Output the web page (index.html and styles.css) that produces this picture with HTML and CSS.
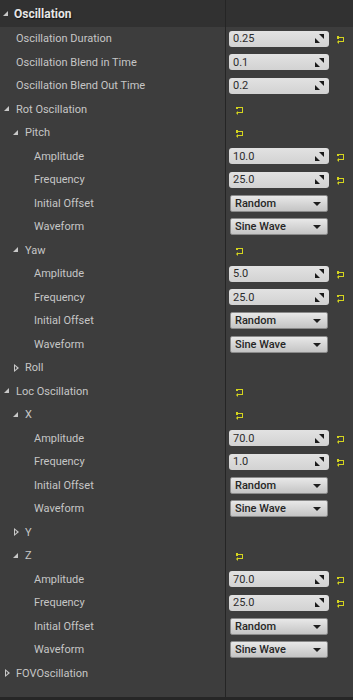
FILE: index.html
```html
<!DOCTYPE html>
<html lang="en">
<head>
    <meta charset="UTF-8">
    <meta name="viewport" content="width=device-width, initial-scale=1.0">
    <title>Details</title>
    <link rel="stylesheet" href="styles.css">
</head>
<body>
<div class="panel">

  <div class="row head">
    <div class="name"><span class="arrow open"></span>Oscillation</div>
    <div class="value"></div>
  </div>

  <div class="row l1">
    <div class="name"><span class="arrow"></span>Oscillation Duration</div>
    <div class="value"><div class="num">0.25<i class="spin"></i></div><i class="reset"></i></div>
  </div>
  <div class="row l1">
    <div class="name"><span class="arrow"></span>Oscillation Blend in Time</div>
    <div class="value"><div class="num">0.1<i class="spin"></i></div></div>
  </div>
  <div class="row l1">
    <div class="name"><span class="arrow"></span>Oscillation Blend Out Time</div>
    <div class="value"><div class="num">0.2<i class="spin"></i></div></div>
  </div>

  <div class="row l1">
    <div class="name"><span class="arrow open"></span>Rot Oscillation</div>
    <div class="value"><i class="reset grp"></i></div>
  </div>
  <div class="row l2">
    <div class="name"><span class="arrow open"></span>Pitch</div>
    <div class="value"><i class="reset grp"></i></div>
  </div>
  <div class="row l3">
    <div class="name"><span class="arrow"></span>Amplitude</div>
    <div class="value"><div class="num">10.0<i class="spin"></i></div><i class="reset"></i></div>
  </div>
  <div class="row l3">
    <div class="name"><span class="arrow"></span>Frequency</div>
    <div class="value"><div class="num">25.0<i class="spin"></i></div><i class="reset"></i></div>
  </div>
  <div class="row l3">
    <div class="name"><span class="arrow"></span>Initial Offset</div>
    <div class="value"><div class="combo">Random<i class="down"></i></div></div>
  </div>
  <div class="row l3">
    <div class="name"><span class="arrow"></span>Waveform</div>
    <div class="value"><div class="combo">Sine Wave<i class="down"></i></div></div>
  </div>

  <div class="row l2">
    <div class="name"><span class="arrow open"></span>Yaw</div>
    <div class="value"><i class="reset grp"></i></div>
  </div>
  <div class="row l3">
    <div class="name"><span class="arrow"></span>Amplitude</div>
    <div class="value"><div class="num">5.0<i class="spin"></i></div><i class="reset"></i></div>
  </div>
  <div class="row l3">
    <div class="name"><span class="arrow"></span>Frequency</div>
    <div class="value"><div class="num">25.0<i class="spin"></i></div><i class="reset"></i></div>
  </div>
  <div class="row l3">
    <div class="name"><span class="arrow"></span>Initial Offset</div>
    <div class="value"><div class="combo">Random<i class="down"></i></div></div>
  </div>
  <div class="row l3">
    <div class="name"><span class="arrow"></span>Waveform</div>
    <div class="value"><div class="combo">Sine Wave<i class="down"></i></div></div>
  </div>

  <div class="row l2">
    <div class="name"><span class="arrow shut"></span>Roll</div>
    <div class="value"></div>
  </div>

  <div class="row l1">
    <div class="name"><span class="arrow open"></span>Loc Oscillation</div>
    <div class="value"><i class="reset grp"></i></div>
  </div>
  <div class="row l2">
    <div class="name"><span class="arrow open"></span>X</div>
    <div class="value"><i class="reset grp"></i></div>
  </div>
  <div class="row l3">
    <div class="name"><span class="arrow"></span>Amplitude</div>
    <div class="value"><div class="num">70.0<i class="spin"></i></div><i class="reset"></i></div>
  </div>
  <div class="row l3">
    <div class="name"><span class="arrow"></span>Frequency</div>
    <div class="value"><div class="num">1.0<i class="spin"></i></div><i class="reset"></i></div>
  </div>
  <div class="row l3">
    <div class="name"><span class="arrow"></span>Initial Offset</div>
    <div class="value"><div class="combo">Random<i class="down"></i></div></div>
  </div>
  <div class="row l3">
    <div class="name"><span class="arrow"></span>Waveform</div>
    <div class="value"><div class="combo">Sine Wave<i class="down"></i></div></div>
  </div>

  <div class="row l2">
    <div class="name"><span class="arrow shut"></span>Y</div>
    <div class="value"></div>
  </div>

  <div class="row l2">
    <div class="name"><span class="arrow open"></span>Z</div>
    <div class="value"><i class="reset grp"></i></div>
  </div>
  <div class="row l3">
    <div class="name"><span class="arrow"></span>Amplitude</div>
    <div class="value"><div class="num">70.0<i class="spin"></i></div><i class="reset"></i></div>
  </div>
  <div class="row l3">
    <div class="name"><span class="arrow"></span>Frequency</div>
    <div class="value"><div class="num">25.0<i class="spin"></i></div><i class="reset"></i></div>
  </div>
  <div class="row l3">
    <div class="name"><span class="arrow"></span>Initial Offset</div>
    <div class="value"><div class="combo">Random<i class="down"></i></div></div>
  </div>
  <div class="row l3">
    <div class="name"><span class="arrow"></span>Waveform</div>
    <div class="value"><div class="combo">Sine Wave<i class="down"></i></div></div>
  </div>

  <div class="row l1">
    <div class="name"><span class="arrow shut"></span>FOVOscillation</div>
    <div class="value"></div>
  </div>

  <div class="row tail">
    <div class="name"></div>
    <div class="value"></div>
  </div>
</div>
<div class="foot"></div>
</body>
</html>
```

FILE: styles.css
```css
* {
  box-sizing: border-box;
}

body {
  margin: 0;
  background: #3d3d3d;
  font-family: Roboto, "Liberation Sans", sans-serif;
  font-size: 11px;
  color: #c6c6c6;
}

.panel {
  display: flex;
  flex-direction: column;
}

.row {
  display: flex;
  height: 23.5px;
}

.name {
  width: 226px;
  flex: none;
  display: flex;
  align-items: center;
  border-right: 1px solid #252525;
  white-space: nowrap;
}

.value {
  flex: 1;
  display: flex;
  align-items: center;
  padding-left: 3px;
}

/* header */
.head {
  height: 27px;
  background: #313131;
}
.head .name {
  padding-left: 3px;
  font-size: 12px;
  font-weight: bold;
  color: #e6e6e6;
  text-shadow: 1px 1px 1px #111;
}
.head .arrow {
  width: 11px;
}

.tail {
  height: 12px;
}

.foot {
  height: 3px;
  background: #262626;
}

/* indent levels */
.l1 .name { padding-left: 4px; }
.l2 .name { padding-left: 13px; }
.l3 .name { padding-left: 22px; }

.arrow {
  width: 12px;
  height: 10px;
  flex: none;
  position: relative;
}
.arrow.open::before {
  content: "";
  position: absolute;
  left: 0;
  top: 2px;
  border-style: solid;
  border-width: 0 0 5px 5px;
  border-color: transparent transparent #c8c8c8 transparent;
}
.arrow.shut::before {
  content: "";
  position: absolute;
  left: 1px;
  top: 1px;
  width: 0;
  height: 0;
  border-style: solid;
  border-width: 4px 0 4px 5px;
  border-color: transparent transparent transparent #c8c8c8;
}
.arrow.shut::after {
  content: "";
  position: absolute;
  left: 2px;
  top: 3px;
  border-style: solid;
  border-width: 2px 0 2px 2.5px;
  border-color: transparent transparent transparent #3d3d3d;
}

/* numeric entry */
.num {
  width: 100px;
  height: 16px;
  border-radius: 3px;
  background: linear-gradient(#e2e2e2, #d2d2d2);
  color: #2c2c2c;
  display: flex;
  align-items: center;
  padding-left: 4px;
  position: relative;
}

/* two corner triangles */
.spin {
  position: absolute;
  right: 5px;
  top: 3.5px;
  width: 9px;
  height: 9px;
}
.spin::before,
.spin::after {
  content: "";
  position: absolute;
  width: 0;
  height: 0;
  border-style: solid;
}
.spin::before {
  right: 0;
  top: 0;
  border-width: 0 5.5px 5.5px 0;
  border-color: transparent #1a1a1a transparent transparent;
}
.spin::after {
  left: 0;
  bottom: 0;
  border-width: 5.5px 0 0 5.5px;
  border-color: transparent transparent transparent #1a1a1a;
}

/* combo box */
.combo {
  width: 98px;
  height: 17px;
  margin-left: 1px;
  border: 1px solid #8a8a8a;
  border-radius: 2px;
  background: linear-gradient(#e8e8e8, #c4c4c4);
  color: #262626;
  font-weight: 500;
  display: flex;
  align-items: center;
  padding-left: 4px;
  position: relative;
}

.down {
  position: absolute;
  right: 6px;
  top: 6px;
  border-style: solid;
  border-width: 4px 4px 0 4px;
  border-color: #1e1e1e transparent transparent transparent;
}

/* reset to default */
.reset {
  width: 5.5px;
  height: 5.5px;
  margin-left: 9px;
  margin-top: 1px;
  position: relative;
  border: 1.5px solid #d4d41e;
  border-left: none;
}
.reset::before {
  content: "";
  position: absolute;
  left: -1px;
  top: -1.5px;
  width: 1.5px;
  height: 2.5px;
  background: #d4d41e;
}
.reset::after {
  content: "";
  position: absolute;
  left: -1.5px;
  bottom: -3px;
  border-style: solid;
  border-width: 2px 2.5px 2px 0;
  border-color: transparent #d4d41e transparent transparent;
}
.reset.grp {
  margin-left: 8px;
}
```
